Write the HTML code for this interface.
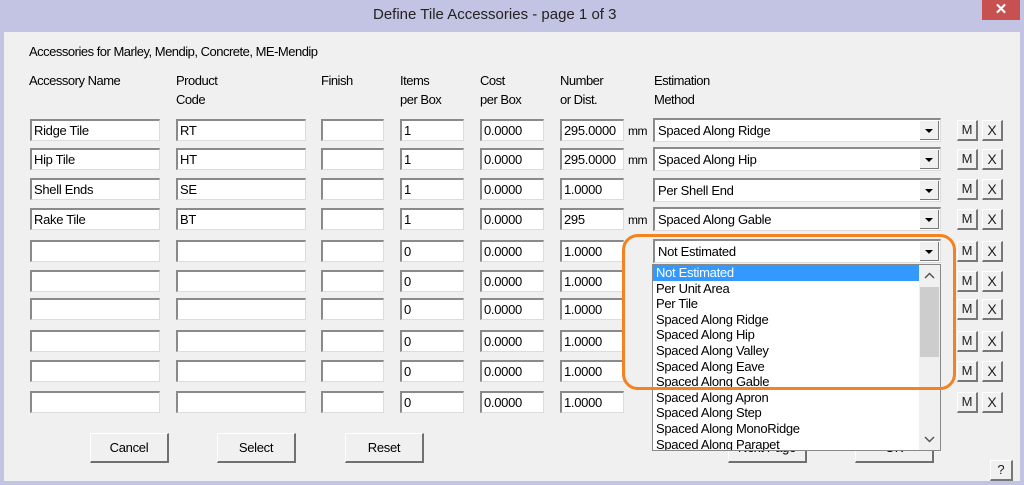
<!DOCTYPE html>
<html><head><style>
*{box-sizing:border-box;margin:0;padding:0}
body{width:1024px;height:485px;background:#c3c3e3;position:relative;overflow:hidden;font-family:"Liberation Sans",Arial,sans-serif;font-size:13px;color:#000}
.dlg{position:absolute;left:4px;top:32px;width:1016px;height:449px;background:#f0f0f0}
.t{position:absolute;white-space:nowrap;letter-spacing:-0.5px;line-height:19px;font-size:13px}
.in{position:absolute;height:22px;background:#fff;border-top:2px solid #8a8a8a;border-left:2px solid #8a8a8a;border-bottom:1px solid #dcdcdc;border-right:1px solid #dcdcdc;padding:2px 0 0 2px;white-space:nowrap;letter-spacing:-0.3px;font-size:13px;line-height:15px}
.cb{position:absolute;height:24px;width:288px;background:#fff;border-top:2px solid #8a8a8a;border-left:2px solid #8a8a8a;border-bottom:1px solid #dcdcdc;border-right:1px solid #dcdcdc;padding:3px 0 0 3px;font-size:13px;letter-spacing:-0.3px}
.cb i{position:absolute;right:1px;top:1px;width:19px;height:19px;background:#f0f0f0;border-right:1px solid #777;border-bottom:1px solid #777}
.cb i:after{content:"";position:absolute;left:5px;top:8px;border-left:4px solid transparent;border-right:4px solid transparent;border-top:4px solid #000}
.sb{position:absolute;width:21px;height:21px;background:#f0f0f0;border-top:1px solid #fff;border-left:1px solid #fff;border-right:2px solid #777;border-bottom:2px solid #777;text-align:center;font-size:13px;line-height:18px;color:#222}
.btn{position:absolute;width:79px;height:30px;background:#f0f0f0;border-top:1px solid #fff;border-left:1px solid #fff;border-right:2px solid #707070;border-bottom:2px solid #707070;text-align:center;line-height:27px;font-size:13px;letter-spacing:-0.3px}
.lst{position:absolute;left:652px;top:264px;width:289px;height:187px;background:#fff;border:1px solid #888;overflow:hidden}
.lst .it{height:15.6px;line-height:15px;padding-left:3px;font-size:13px;letter-spacing:-0.3px;width:266px}
.lst .sel{background:#3399ff;color:#fff}
.scr{position:absolute;right:0;top:0;width:21px;height:185px;background:#f0f0f0}
</style></head><body>
<div class="t" style="left:373px;top:5px;font-size:15px;color:#222;letter-spacing:0">Define Tile Accessories - page 1 of 3</div>
<div style="position:absolute;left:982px;top:0;width:38px;height:20px;background:#c75050;color:#fff;text-align:center;font-size:15px;font-weight:bold;line-height:20px">✕</div>
<div class="dlg"></div>
<div class="t" style="left:29px;top:42px">Accessories for Marley, Mendip, Concrete, ME-Mendip</div>
<div class="t" style="left:29px;top:71px">Accessory Name</div>
<div class="t" style="left:176px;top:71px">Product<br>Code</div>
<div class="t" style="left:321px;top:71px">Finish</div>
<div class="t" style="left:400px;top:71px">Items<br>per Box</div>
<div class="t" style="left:480px;top:71px">Cost<br>per Box</div>
<div class="t" style="left:560px;top:71px">Number<br>or Dist.</div>
<div class="t" style="left:654px;top:71px">Estimation<br>Method</div>

<div id="rows"></div>
<script>
var tops=[119,148,178,208,240,270,298,330,360,391];
var nm=["Ridge Tile","Hip Tile","Shell Ends","Rake Tile","","","","","",""];
var cd=["RT","HT","SE","BT","","","","","",""];
var it=["1","1","1","1","0","0","0","0","0","0"];
var num=["295.0000","295.0000","1.0000","295","1.0000","1.0000","1.0000","1.0000","1.0000","1.0000"];
var h="";
for(var i=0;i<10;i++){var y=tops[i];
h+='<div class="in" style="left:30px;top:'+y+'px;width:130px">'+nm[i]+'</div>';
h+='<div class="in" style="left:176px;top:'+y+'px;width:130px">'+cd[i]+'</div>';
h+='<div class="in" style="left:321px;top:'+y+'px;width:63px"></div>';
h+='<div class="in" style="left:400px;top:'+y+'px;width:64px">'+it[i]+'</div>';
h+='<div class="in" style="left:480px;top:'+y+'px;width:64px">0.0000</div>';
h+='<div class="in" style="left:560px;top:'+y+'px;width:64px">'+num[i]+'</div>';
if(i==0||i==1||i==3)h+='<div class="t" style="left:628px;top:'+(y+3)+'px;font-size:12px">mm</div>';
h+='<div class="sb" style="left:957px;top:'+(y+1)+'px">M</div><div class="sb" style="left:982px;top:'+(y+1)+'px;font-size:14px">X</div>';
}
document.getElementById("rows").innerHTML=h;
</script>
<div class="cb" style="left:653px;top:118px">Spaced Along Ridge<i></i></div>
<div class="cb" style="left:653px;top:147px">Spaced Along Hip<i></i></div>
<div class="cb" style="left:653px;top:178px">Per Shell End<i></i></div>
<div class="cb" style="left:653px;top:207px">Spaced Along Gable<i></i></div>
<div class="cb" style="left:653px;top:239px">Not Estimated<i></i></div>

<div class="btn" style="left:90px;top:433px">Cancel</div>
<div class="btn" style="left:217px;top:433px">Select</div>
<div class="btn" style="left:345px;top:433px">Reset</div>
<div class="btn" style="left:728px;top:433px">Next Page</div>
<div class="btn" style="left:855px;top:433px">OK</div>
<div class="sb" style="left:990px;top:460px;width:23px;height:21px">?</div>

<div class="lst">
<div class="it sel">Not Estimated</div><div class="it">Per Unit Area</div><div class="it">Per Tile</div><div class="it">Spaced Along Ridge</div><div class="it">Spaced Along Hip</div><div class="it">Spaced Along Valley</div><div class="it">Spaced Along Eave</div><div class="it">Spaced Along Gable</div><div class="it">Spaced Along Apron</div><div class="it">Spaced Along Step</div><div class="it">Spaced Along MonoRidge</div><div class="it">Spaced Along Parapet</div>
<div class="scr">
<svg style="position:absolute;left:5px;top:7px" width="11" height="7"><path d="M1 6L5.5 1.5L10 6" stroke="#555" stroke-width="1.5" fill="none"/></svg>
<div style="position:absolute;left:1px;top:22px;width:19px;height:70px;background:#cdcdcd"></div>
<svg style="position:absolute;left:5px;top:171px" width="11" height="7"><path d="M1 1L5.5 5.5L10 1" stroke="#555" stroke-width="1.5" fill="none"/></svg>
</div>
</div>
<div style="position:absolute;left:622px;top:234px;width:334px;height:156px;border:3px solid #f58220;border-radius:16px"></div>
</body></html>
